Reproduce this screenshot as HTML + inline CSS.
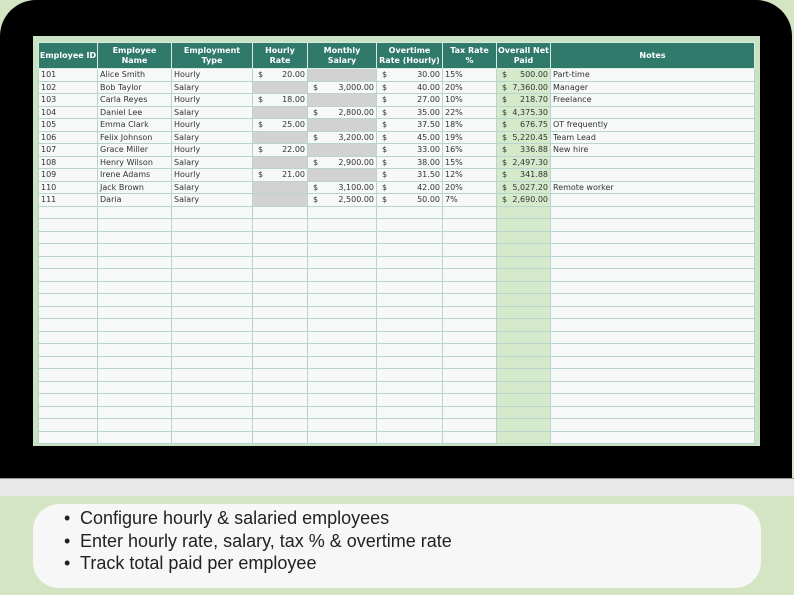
<!DOCTYPE html>
<html><head><style>
*{margin:0;padding:0;box-sizing:border-box}
body{width:794px;height:595px;overflow:hidden;background:#d3e5c3;position:relative;font-family:"DejaVu Sans","Liberation Sans",sans-serif}
#bezel{position:absolute;left:0;top:0;width:792px;height:478px;background:#000;border-radius:36px 36px 0 0}
#grey{position:absolute;left:0;top:478px;width:794px;height:18px;background:#e8e8e8;border-top:1px solid #999}
#frame{position:absolute;left:33px;top:36px;width:727px;height:410px;background:#c9e2c4}
table{position:absolute;left:38px;top:42px;border-collapse:collapse;table-layout:fixed;font-size:8px;color:#333}
th{background:#2f7a6b;color:#fff;font-weight:bold;height:26px;line-height:10px;border:1px solid #d8ece0;text-align:center;font-size:8px}
td{height:12.5px;line-height:11px;border:1px solid #b9d3ce;background:#f6f9f8;padding:0 2px;white-space:nowrap;overflow:hidden}
td.g{background:#d2d2d2}
td.n{background:#d4eacb}
td .d{float:left;padding-left:3px}
td.r{text-align:right}
#box{position:absolute;left:33px;top:504px;width:728px;height:84px;background:#f7f7f7;border-radius:26px}
#box ul{list-style:none;position:absolute;left:31px;top:3px;font-family:"Liberation Sans",sans-serif;font-size:18px;color:#222;line-height:22.5px}
#box b{font-weight:normal;display:inline-block;width:16px}
</style></head><body>
<div id="bezel"></div>
<div id="grey"></div>
<div id="frame"></div>
<table>
<colgroup><col style="width:59px"><col style="width:74px"><col style="width:81px"><col style="width:55px"><col style="width:69px"><col style="width:66px"><col style="width:54px"><col style="width:54px"><col style="width:204px"></colgroup>
<tr><th>Employee ID</th><th>Employee<br>Name</th><th>Employment<br>Type</th><th>Hourly<br>Rate</th><th>Monthly<br>Salary</th><th>Overtime<br>Rate (Hourly)</th><th>Tax Rate<br>%</th><th>Overall Net<br>Paid</th><th>Notes</th></tr>
<tr><td>101</td><td>Alice Smith</td><td>Hourly</td><td class="r"><span class="d">$</span>20.00</td><td class="g"></td><td class="r"><span class="d">$</span>30.00</td><td>15%</td><td class="n r"><span class="d">$</span>500.00</td><td>Part-time</td></tr>
<tr><td>102</td><td>Bob Taylor</td><td>Salary</td><td class="g"></td><td class="r"><span class="d">$</span>3,000.00</td><td class="r"><span class="d">$</span>40.00</td><td>20%</td><td class="n r"><span class="d">$</span>7,360.00</td><td>Manager</td></tr>
<tr><td>103</td><td>Carla Reyes</td><td>Hourly</td><td class="r"><span class="d">$</span>18.00</td><td class="g"></td><td class="r"><span class="d">$</span>27.00</td><td>10%</td><td class="n r"><span class="d">$</span>218.70</td><td>Freelance</td></tr>
<tr><td>104</td><td>Daniel Lee</td><td>Salary</td><td class="g"></td><td class="r"><span class="d">$</span>2,800.00</td><td class="r"><span class="d">$</span>35.00</td><td>22%</td><td class="n r"><span class="d">$</span>4,375.30</td><td></td></tr>
<tr><td>105</td><td>Emma Clark</td><td>Hourly</td><td class="r"><span class="d">$</span>25.00</td><td class="g"></td><td class="r"><span class="d">$</span>37.50</td><td>18%</td><td class="n r"><span class="d">$</span>676.75</td><td>OT frequently</td></tr>
<tr><td>106</td><td>Felix Johnson</td><td>Salary</td><td class="g"></td><td class="r"><span class="d">$</span>3,200.00</td><td class="r"><span class="d">$</span>45.00</td><td>19%</td><td class="n r"><span class="d">$</span>5,220.45</td><td>Team Lead</td></tr>
<tr><td>107</td><td>Grace Miller</td><td>Hourly</td><td class="r"><span class="d">$</span>22.00</td><td class="g"></td><td class="r"><span class="d">$</span>33.00</td><td>16%</td><td class="n r"><span class="d">$</span>336.88</td><td>New hire</td></tr>
<tr><td>108</td><td>Henry Wilson</td><td>Salary</td><td class="g"></td><td class="r"><span class="d">$</span>2,900.00</td><td class="r"><span class="d">$</span>38.00</td><td>15%</td><td class="n r"><span class="d">$</span>2,497.30</td><td></td></tr>
<tr><td>109</td><td>Irene Adams</td><td>Hourly</td><td class="r"><span class="d">$</span>21.00</td><td class="g"></td><td class="r"><span class="d">$</span>31.50</td><td>12%</td><td class="n r"><span class="d">$</span>341.88</td><td></td></tr>
<tr><td>110</td><td>Jack Brown</td><td>Salary</td><td class="g"></td><td class="r"><span class="d">$</span>3,100.00</td><td class="r"><span class="d">$</span>42.00</td><td>20%</td><td class="n r"><span class="d">$</span>5,027.20</td><td>Remote worker</td></tr>
<tr><td>111</td><td>Daria</td><td>Salary</td><td class="g"></td><td class="r"><span class="d">$</span>2,500.00</td><td class="r"><span class="d">$</span>50.00</td><td>7%</td><td class="n r"><span class="d">$</span>2,690.00</td><td></td></tr>
<tr><td></td><td></td><td></td><td></td><td></td><td></td><td></td><td class="n"></td><td></td></tr>
<tr><td></td><td></td><td></td><td></td><td></td><td></td><td></td><td class="n"></td><td></td></tr>
<tr><td></td><td></td><td></td><td></td><td></td><td></td><td></td><td class="n"></td><td></td></tr>
<tr><td></td><td></td><td></td><td></td><td></td><td></td><td></td><td class="n"></td><td></td></tr>
<tr><td></td><td></td><td></td><td></td><td></td><td></td><td></td><td class="n"></td><td></td></tr>
<tr><td></td><td></td><td></td><td></td><td></td><td></td><td></td><td class="n"></td><td></td></tr>
<tr><td></td><td></td><td></td><td></td><td></td><td></td><td></td><td class="n"></td><td></td></tr>
<tr><td></td><td></td><td></td><td></td><td></td><td></td><td></td><td class="n"></td><td></td></tr>
<tr><td></td><td></td><td></td><td></td><td></td><td></td><td></td><td class="n"></td><td></td></tr>
<tr><td></td><td></td><td></td><td></td><td></td><td></td><td></td><td class="n"></td><td></td></tr>
<tr><td></td><td></td><td></td><td></td><td></td><td></td><td></td><td class="n"></td><td></td></tr>
<tr><td></td><td></td><td></td><td></td><td></td><td></td><td></td><td class="n"></td><td></td></tr>
<tr><td></td><td></td><td></td><td></td><td></td><td></td><td></td><td class="n"></td><td></td></tr>
<tr><td></td><td></td><td></td><td></td><td></td><td></td><td></td><td class="n"></td><td></td></tr>
<tr><td></td><td></td><td></td><td></td><td></td><td></td><td></td><td class="n"></td><td></td></tr>
<tr><td></td><td></td><td></td><td></td><td></td><td></td><td></td><td class="n"></td><td></td></tr>
<tr><td></td><td></td><td></td><td></td><td></td><td></td><td></td><td class="n"></td><td></td></tr>
<tr><td></td><td></td><td></td><td></td><td></td><td></td><td></td><td class="n"></td><td></td></tr>
<tr><td></td><td></td><td></td><td></td><td></td><td></td><td></td><td class="n"></td><td></td></tr>
</table>
<div id="box"><ul>
<li><b>•</b>Configure hourly &amp; salaried employees</li>
<li><b>•</b>Enter hourly rate, salary, tax % &amp; overtime rate</li>
<li><b>•</b>Track total paid per employee</li>
</ul></div>
</body></html>
